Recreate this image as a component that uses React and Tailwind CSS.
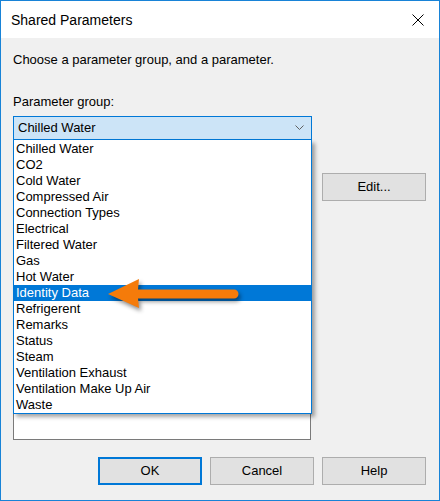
import React from "react";

const groups = [
  "Chilled Water",
  "CO2",
  "Cold Water",
  "Compressed Air",
  "Connection Types",
  "Electrical",
  "Filtered Water",
  "Gas",
  "Hot Water",
  "Identity Data",
  "Refrigerent",
  "Remarks",
  "Status",
  "Steam",
  "Ventilation Exhaust",
  "Ventilation Make Up Air",
  "Waste",
];

const selected = "Identity Data";

const DialogButton = ({ children, primary }) => (
  <button
    className={
      primary
        ? "w-[104px] h-[28px] bg-[#e1e1e1] border-2 border-[#0078d7] text-[13px] leading-[16px] text-black"
        : "w-[104px] h-[28px] bg-[#e1e1e1] border border-[#adadad] text-[13px] leading-[16px] text-black"
    }
  >
    {children}
  </button>
);

const App = () => {
  return (
    <div
      className="w-[440px] h-[501px] border border-[#1883d7] bg-[#f0f0f0] flex flex-col relative"
      style={{ fontFamily: '"Liberation Sans", Arial, sans-serif' }}
    >
      {/* title bar */}
      <div className="h-[37px] bg-white flex items-center justify-between pl-[10px] pr-[15px]">
        <span className="text-[14px] leading-[16px] text-black">Shared Parameters</span>
        <svg width="12" height="12" viewBox="0 0 12 12">
          <path d="M0.5 0.5 L11.5 11.5 M11.5 0.5 L0.5 11.5" stroke="#000" strokeWidth="1" fill="none" />
        </svg>
      </div>

      <div className="flex flex-col pl-[12px] pr-[13px] pt-[14px] text-[13px] leading-[16px] text-black">
        <p>Choose a parameter group, and a parameter.</p>
        <p className="mt-[26px]">Parameter group:</p>

        {/* combo + open dropdown */}
        <div className="relative mt-[6px] w-[299px] z-10">
          <div className="h-[24px] border border-[#0078d7] bg-[#cce4f7] flex items-center justify-between pl-[4px] pr-[7px]">
            <span>Chilled Water</span>
            <svg width="9" height="6" viewBox="0 0 9 6">
              <path d="M0.5 0.5 L4.5 4.5 L8.5 0.5" stroke="#606060" strokeWidth="1" fill="none" />
            </svg>
          </div>
          <ul className="absolute top-full left-0 w-[299px] bg-white border-x border-b border-[#0078d7] pt-[1px] shadow-[3px_3px_4px_rgba(0,0,0,0.35)]">
            {groups.map((g) => (
              <li
                key={g}
                className={
                  g === selected
                    ? "h-[16px] pl-[2px] bg-[#0078d7] text-white"
                    : "h-[16px] pl-[2px]"
                }
              >
                {g}
              </li>
            ))}
          </ul>
        </div>

        <div className="flex mt-[8px] gap-[11px]">
          <div className="w-[298px] h-[292px] bg-white border border-[#7a7a7a]"></div>
          <div className="pt-[25px]">
            <DialogButton>Edit...</DialogButton>
          </div>
        </div>

        <div className="flex justify-end gap-[8px] mt-[17px]">
          <DialogButton primary>OK</DialogButton>
          <DialogButton>Cancel</DialogButton>
          <DialogButton>Help</DialogButton>
        </div>
      </div>

      {/* orange callout arrow */}
      <svg
        className="absolute left-[100px] top-[270px] z-20"
        width="150"
        height="46"
        viewBox="100 270 150 46"
        style={{ filter: "drop-shadow(2px 3px 2px rgba(0,0,0,0.45))" }}
      >
        <path
          d="M107 293 L138 278 L137 288.5 L233 288.5 A4.5 4.5 0 0 1 233 297.5 L137 297.5 L138 307 Z"
          fill="#f57b0a"
        />
      </svg>
    </div>
  );
};

export default App;
